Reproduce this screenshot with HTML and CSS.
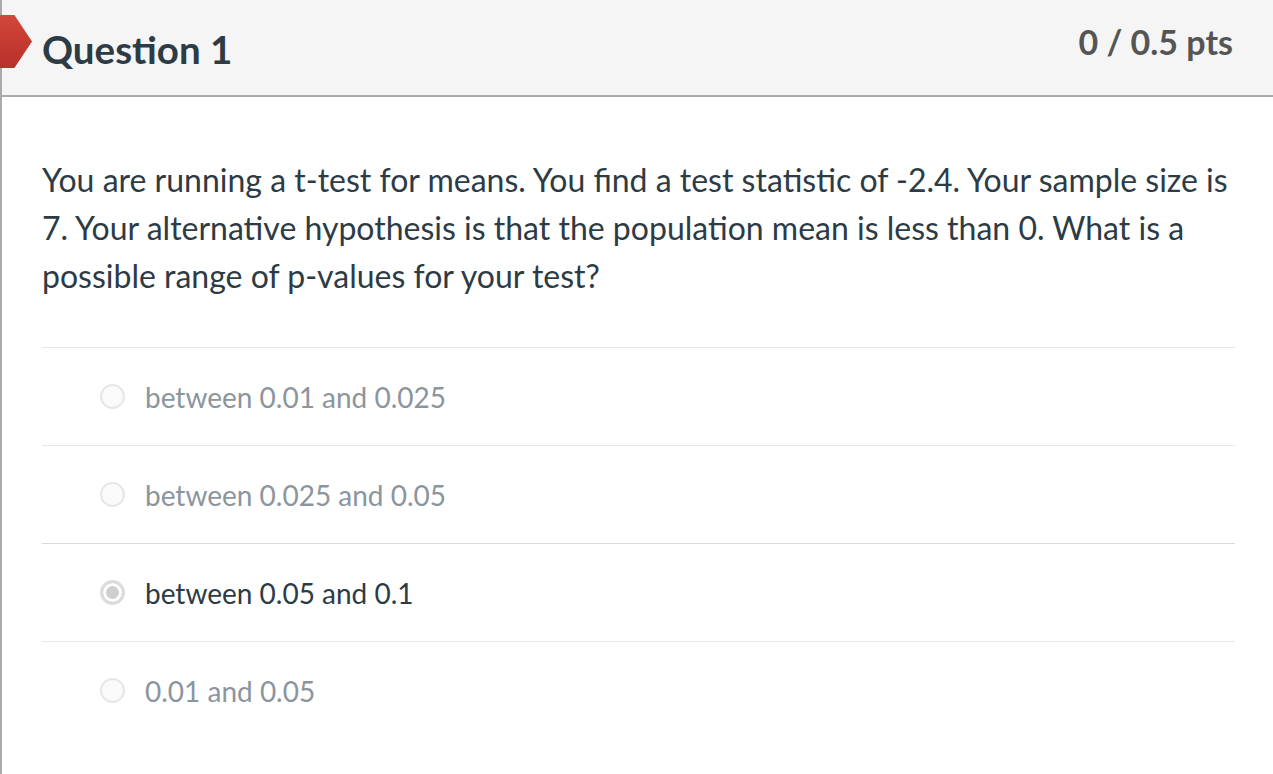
FILE: index.html
```html
<!DOCTYPE html>
<html lang="en">
<head>
    <meta charset="UTF-8">
    <title>Question 1</title>
    <link rel="stylesheet" href="styles.css">
</head>
<body>
    <div class="question">
        <div class="header">
            <span class="flag"></span>
            <div class="title">Question 1</div>
            <div class="points">0 / 0.5 pts</div>
        </div>

        <div class="content">
            <div class="text">
                You are running a t-test for means. You find a test statistic of -2.4. Your sample size is<br>
                7. Your alternative hypothesis is that the population mean is less than 0. What is a<br>
                possible range of p-values for your test?
            </div>

            <div class="answers">
                <div class="answer">
                    <span class="radio"></span>
                    <span class="label">between 0.01 and 0.025</span>
                </div>
                <div class="answer">
                    <span class="radio"></span>
                    <span class="label">between 0.025 and 0.05</span>
                </div>
                <div class="answer selected">
                    <span class="radio"></span>
                    <span class="label">between 0.05 and 0.1</span>
                </div>
                <div class="answer">
                    <span class="radio"></span>
                    <span class="label">0.01 and 0.05</span>
                </div>
            </div>
        </div>
    </div>
</body>
</html>
```

FILE: styles.css
```css
body {
    margin: 0;
    font-family: Lato, "Open Sans", sans-serif;
    background: white;
    color: #2d3b45;
}

.question {
    border-left: 2px solid #aaaaaa;
    min-height: 774px;
    box-sizing: border-box;
}

.header {
    position: relative;
    display: flex;
    align-items: center;
    justify-content: space-between;
    height: 95px;
    padding: 0 40px 0 40px;
    background: #f5f5f5;
    border-bottom: 2px solid #aaaaaa;
}

/* red marker sticking out on the left */
.flag {
    position: absolute;
    left: -2px;
    top: 15px;
    width: 32px;
    height: 53px;
    background: linear-gradient(#d2473a, #b8302a);
    clip-path: polygon(0 0, 45% 0, 100% 50%, 45% 100%, 0 100%);
}

.title {
    font-size: 38.5px;
    font-weight: bold;
    color: #2d3b45;
    padding-top: 2px;
}

.points {
    font-size: 34px;
    font-weight: bold;
    color: #555555;
    padding-bottom: 12px;
}

.content {
    padding: 59px 38px 0 40px;
}

.text {
    font-size: 32px;
    line-height: 48px;
    white-space: nowrap;
}

.answers {
    margin-top: 47px;
}

.answer {
    display: flex;
    align-items: center;
    gap: 20px;
    height: 97px;
    padding-left: 58px;
    border-top: 1px solid #e8e8e8;
    font-size: 28px;
    color: #8b959e;
}

.answer:nth-child(3) {
    border-top-color: #dadada;
}

.radio {
    width: 21px;
    height: 21px;
    border-radius: 50%;
    border: 2px solid #e6e6e6;
    background: #fafafa;
}

.answer.selected {
    color: #2d3b45;
}

.answer.selected .radio {
    width: 19px;
    height: 19px;
    border: 3px solid #dcdcdc;
    background: #cfcfcf;
    box-shadow: inset 0 0 0 3px white;
}
```
